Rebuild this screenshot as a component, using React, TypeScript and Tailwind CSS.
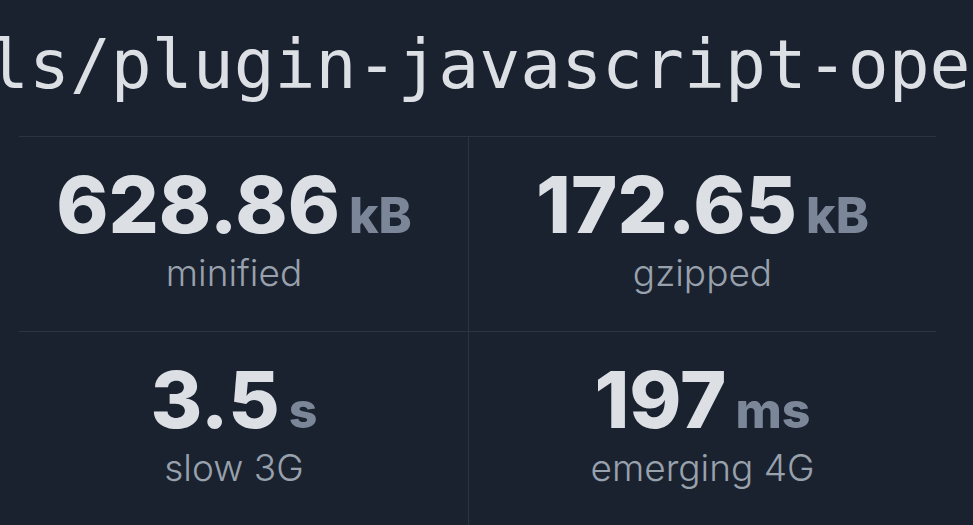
import React from "react";

const stats = [
  [
    { value: "628.86", unit: "kB", label: "minified" },
    { value: "172.65", unit: "kB", label: "gzipped" },
  ],
  [
    { value: "3.5", unit: "s", label: "slow 3G" },
    { value: "197", unit: "ms", label: "emerging 4G" },
  ],
];

function Stat({ value, unit, label, right }: { value: string; unit: string; label: string; right?: boolean }) {
  return (
    <div
      className={
        "flex h-[194px] flex-col items-center pt-[28px] " +
        (right ? "border-l border-[#2b3443]" : "")
      }
    >
      <div className="flex items-baseline gap-[9px]">
        <span className="text-[79px] font-extrabold leading-none text-[#dcdfe4]">{value}</span>
        <span className="text-[50px] font-extrabold leading-none text-[#7b8799]">{unit}</span>
      </div>
      <div className="mt-[10px] text-[37px] font-light leading-none text-[#98a1ac]">{label}</div>
    </div>
  );
}

export default function App() {
  return (
    <div
      className="h-[525px] w-[973px] overflow-hidden bg-[#1a2230]"
      style={{ fontFamily: "Inter, 'Noto Sans', sans-serif" }}
    >
      <div className="h-[136px] overflow-hidden whitespace-nowrap pt-[31px]">
        <div
          className="ml-[-12px] text-[68px] leading-none text-[#dcdfe4]"
          style={{ fontFamily: "'DejaVu Sans Mono', monospace" }}
        >
          ls/plugin-javascript-ope
        </div>
      </div>
      {stats.map((row, i) => (
        <div key={i}>
          <div className="ml-[19px] h-px w-[917px] bg-[#2b3443]" />
          <div className="grid grid-cols-[468px_468px]">
            <Stat {...row[0]} />
            <Stat {...row[1]} right />
          </div>
        </div>
      ))}
    </div>
  );
}
